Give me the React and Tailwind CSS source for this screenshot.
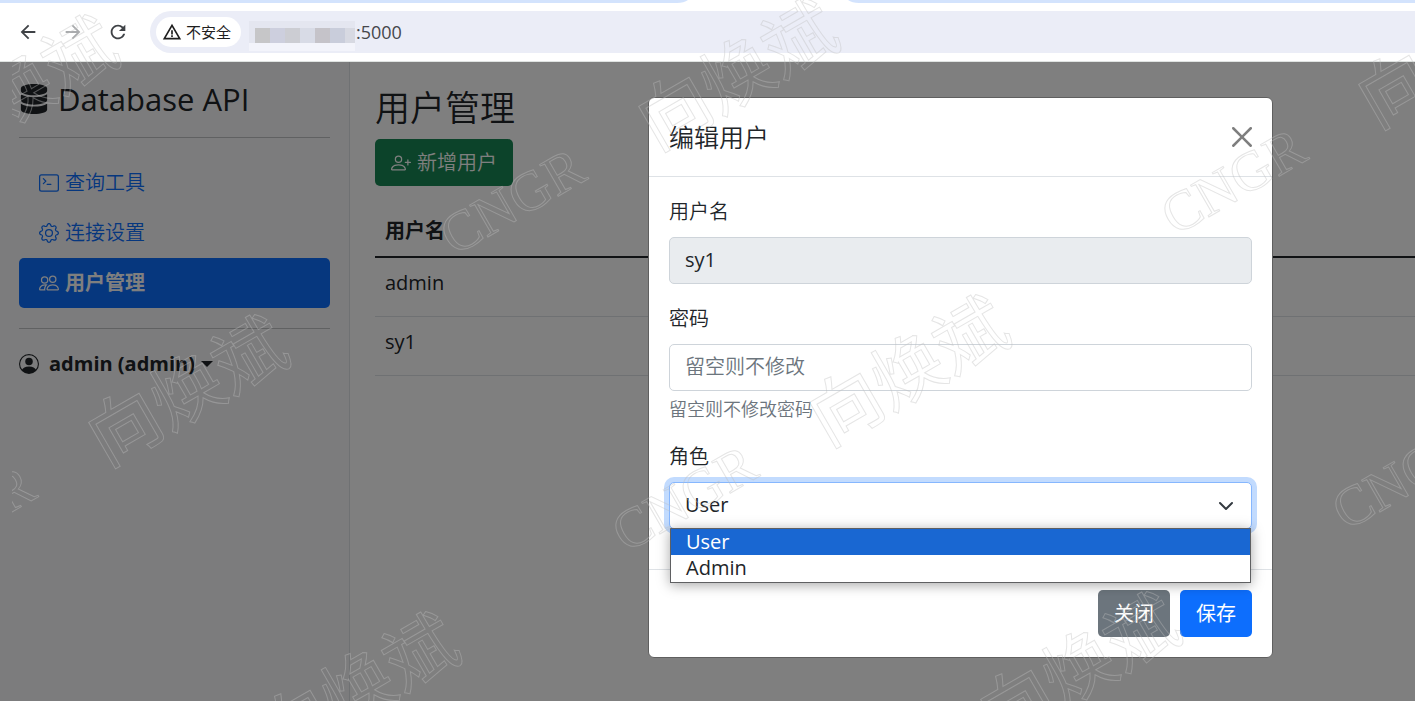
import React, { useState } from "react";
import { BsTerminal, BsGear, BsPeople, BsPersonCircle, BsPersonPlus } from "react-icons/bs";
import { FaDatabase } from "react-icons/fa";
import { MdArrowBack, MdArrowForward, MdRefresh, MdWarningAmber } from "react-icons/md";

const nameMarks = [[17, 91], [187, 391], [737, 75], [908, 371], [358, 688], [1079, 668], [1457, 53]];
const codeMarks = [[-38, 519], [512, 201], [1233, 181], [684, 498], [1404, 476]];

function Watermark() {
  return (
    <svg aria-hidden="true" className="pointer-events-none fixed inset-0 left-3 z-50 h-full w-full overflow-hidden">
      <g transform="translate(-12 0)" fill="none" stroke="#bebebe" strokeOpacity="0.4" strokeWidth="1" textAnchor="middle">
        {nameMarks.map(([x, y]) => (
          <text key={x} transform={`translate(${x} ${y}) rotate(-30)`} y="26" className="font-['Noto_Sans_CJK_SC',sans-serif] text-[72px] font-normal">
            向焕斌
          </text>
        ))}
        {codeMarks.map(([x, y]) => (
          <text key={x} transform={`translate(${x} ${y}) rotate(-30)`} y="19" className="font-['Liberation_Serif',serif] text-[56px]">
            CNGR
          </text>
        ))}
      </g>
    </svg>
  );
}

const mosaic = ["#c6c6c8", "#cdcfde", "#cccdd3", "#d8dbe6", "#c5c3c9", "#c9cddb", "#d7d9e2"];

function BrowserBar() {
  return (
    <header className="shrink-0 border-b border-[#dfe3e1] bg-white">
      <div className="flex h-[3px] bg-[#d3e3fd]">
        <div className="w-[677px] shrink-0" />
        <svg className="h-[3px] w-[182px]" viewBox="0 0 182 3" preserveAspectRatio="none" aria-hidden="true">
          <path d="M0 3Q7 3 11 0H171Q175 3 182 3Z" fill="#fff" />
        </svg>
      </div>
      <div className="flex h-[58px] items-center pl-[17px]">
        <div className="flex w-[133px] shrink-0 items-center gap-[23px] text-[#3f4246]">
          <button aria-label="后退" className="size-[22px]"><MdArrowBack className="size-[22px]" /></button>
          <button aria-label="前进" className="size-[22px] text-[#a9abad]"><MdArrowForward className="size-[22px]" /></button>
          <button aria-label="刷新" className="size-[22px]"><MdRefresh className="size-[22px]" /></button>
        </div>
        <div className="flex h-[42px] flex-1 items-center rounded-l-full bg-[#ebedf7] pl-[6px]">
          <button className="flex h-[30px] items-center gap-1 rounded-full bg-white pr-[10px] pl-[6px] text-[15px] text-[#1f1f1f]">
            <MdWarningAmber className="size-5" />不安全
          </button>
          <svg className="mt-2 ml-2 h-[30px] w-[106px]" viewBox="0 0 106 30" aria-hidden="true">
            <rect width="106" height="30" fill="#f3f4fb" />
            <rect width="106" height="22" fill="#e4e6f0" />
            {mosaic.map((c, i) => <rect key={i} x={6 + i * 15} y="7" width={i === 6 ? 10 : 15} height="15" fill={c} />)}
          </svg>
          <span className="ml-px text-lg text-[#45474c]">:5000</span>
        </div>
      </div>
    </header>
  );
}

const navItems = [
  { label: "查询工具", Icon: BsTerminal },
  { label: "连接设置", Icon: BsGear },
  { label: "用户管理", Icon: BsPeople, active: true },
];

function Sidebar() {
  return (
    <aside className="w-[350px] shrink-0 border-r border-[#dee2e6] bg-[#f8f9fa] px-[19px] pt-[18px]">
      <h1 className="flex h-[38px] items-center gap-[9px] text-[31px]">
        <FaDatabase className="h-[30px] w-[30px]" />Database API
      </h1>
      <hr className="mt-[19px] mb-5 border-[#c0c2c4]" />
      <nav>
        {navItems.map(({ label, Icon, active }) => (
          <a
            key={label}
            href="#"
            className={`flex h-[50px] items-center gap-[6px] rounded-[5px] px-5 ${active ? "bg-[#0d6efd] font-bold text-white" : "font-[350] text-[#0d6efd]"}`}
          >
            <Icon className="size-5" />{label}
          </a>
        ))}
      </nav>
      <hr className="my-5 border-[#c0c2c4]" />
      <button className="flex h-[30px] items-center font-bold">
        <BsPersonCircle className="mr-[10px] size-5" />admin (admin)
        <svg className="ml-[6px] h-[6px] w-3" viewBox="0 0 12 6" aria-hidden="true"><path d="M0 0h12L6 6z" fill="currentColor" /></svg>
      </button>
    </aside>
  );
}

function UserPage() {
  return (
    <main className="min-w-0 flex-1 bg-white pt-[25px] pl-[25px]">
      <h2 className="text-[35px] leading-[42px] font-[350]">用户管理</h2>
      <button className="mt-[10px] flex h-[47px] items-center gap-[6px] rounded-[5px] bg-[#198754] px-4 font-[350] text-white">
        <BsPersonPlus className="size-5" />新增用户
      </button>
      <table className="mt-5 w-full border-separate border-spacing-0 text-left">
        <thead>
          <tr className="h-[52px]">
            <th className="border-b-2 border-[#212529] px-[10px] font-bold">用户名</th>
          </tr>
        </thead>
        <tbody>
          {["admin", "sy1"].map((name) => (
            <tr key={name} className="h-[59px] align-top">
              <td className="border-b border-[#dee2e6] px-[10px] pt-[10px]">{name}</td>
            </tr>
          ))}
        </tbody>
      </table>
    </main>
  );
}

const fieldClass = "block h-[47px] w-full rounded-[5px] border px-[15px] pb-[2px] outline-none";
const labelClass = "mb-[10px] block font-[350]";

function EditDialog() {
  const [role, setRole] = useState("User");
  return (
    <div className="absolute inset-0 flex items-start justify-end bg-black/50 pt-[35px] pr-[142px]">
      <section role="dialog" aria-labelledby="dialog-title" className="w-[625px] rounded-[6px] border border-[#5f5f5f] bg-white">
        <div className="flex items-center justify-between border-b border-[#dee2e6] p-5">
          <h3 id="dialog-title" className="text-[25px] leading-[38px] font-[350]">编辑用户</h3>
          <button aria-label="Close" className="size-5 opacity-50">
            <svg viewBox="0 0 16 16" className="size-5" aria-hidden="true">
              <path d="M.293.293a1 1 0 0 1 1.414 0L8 6.586 14.293.293a1 1 0 1 1 1.414 1.414L9.414 8l6.293 6.293a1 1 0 0 1-1.414 1.414L8 9.414l-6.293 6.293a1 1 0 0 1-1.414-1.414L6.586 8 .293 1.707a1 1 0 0 1 0-1.414z" />
            </svg>
          </button>
        </div>
        <form className="flex flex-col gap-5 px-5 pt-5 pb-10">
          <div>
            <label htmlFor="username" className={labelClass}>用户名</label>
            <input id="username" readOnly value="sy1" className={`${fieldClass} border-[#ced4da] bg-[#e9ecef]`} />
          </div>
          <div>
            <label htmlFor="password" className={labelClass}>密码</label>
            <input id="password" type="password" placeholder="留空则不修改" className={`${fieldClass} border-[#ced4da] font-[350] placeholder:text-[#6c757d]`} />
            <p className="mt-[5px] text-[18px] leading-[26px] font-[350] text-[#6c757d]">留空则不修改密码</p>
          </div>
          <div>
            <label htmlFor="role" className={labelClass}>角色</label>
            <div className="relative">
              <select
                id="role"
                value={role}
                onChange={(e) => setRole(e.target.value)}
                className={`${fieldClass} appearance-none border-[#86b7fe] bg-white ring-[5px] ring-[#c2dbfe]`}
              >
                <option>User</option>
                <option>Admin</option>
              </select>
              <svg viewBox="0 0 16 16" className="pointer-events-none absolute top-4 right-[18px] size-4" aria-hidden="true">
                <path fill="none" stroke="#343a40" strokeLinecap="round" strokeLinejoin="round" strokeWidth="2" d="m2 5 6 6 6-6" />
              </svg>
              <ul role="listbox" aria-label="角色" className="absolute inset-x-px top-[46px] border border-[#5f6062] bg-white leading-[26px] shadow-[0_2px_12px_rgba(0,0,0,0.35)]">
                {["User", "Admin"].map((r) => (
                  <li
                    key={r}
                    role="option"
                    aria-selected={r === role}
                    onClick={() => setRole(r)}
                    className={`px-[15px] ${r === role ? "h-[26px] bg-[#1967d2] text-white" : "h-[27px]"}`}
                  >
                    {r}
                  </li>
                ))}
              </ul>
            </div>
          </div>
        </form>
        <div className="flex justify-end gap-[10px] border-t border-[#dee2e6] p-5 text-white">
          <button className="h-[47px] rounded-[5px] bg-[#6c757d] px-4">关闭</button>
          <button className="h-[47px] rounded-[5px] bg-[#0d6efd] px-4">保存</button>
        </div>
      </section>
    </div>
  );
}

export default function App() {
  return (
    <div className="flex min-h-screen flex-col overflow-hidden font-['Open_Sans','Noto_Sans_CJK_SC',sans-serif] text-[20px] leading-[30px] text-[#212529]">
      <BrowserBar />
      <div className="relative flex flex-1">
        <Sidebar />
        <UserPage />
        <EditDialog />
      </div>
      <Watermark />
    </div>
  );
}
